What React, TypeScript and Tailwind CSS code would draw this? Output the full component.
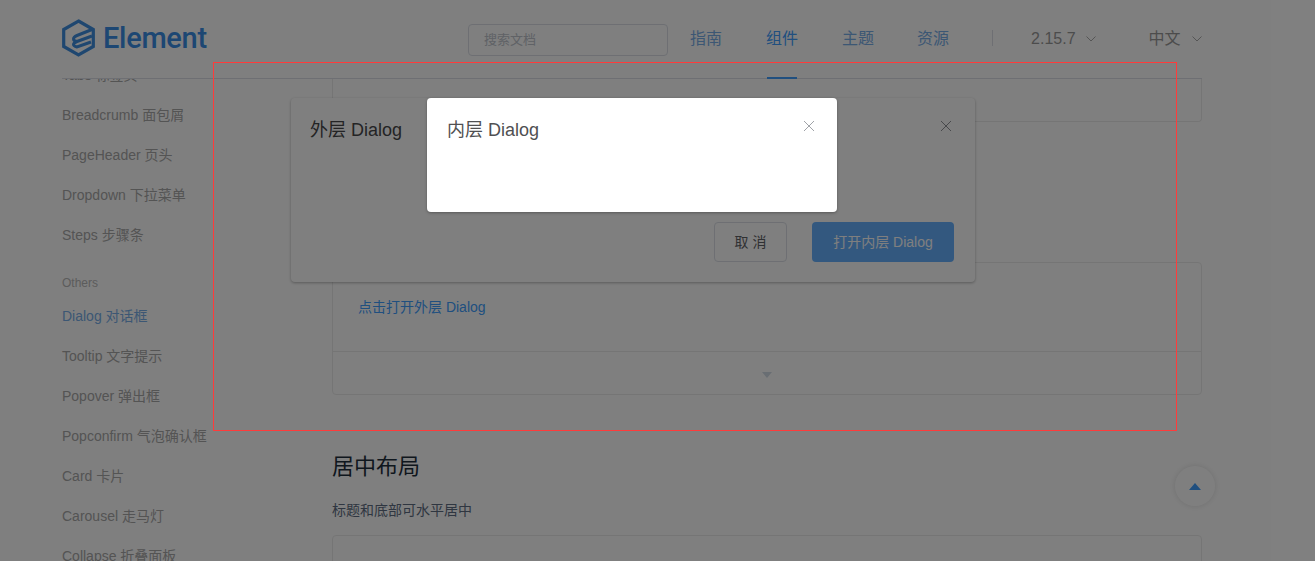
import React from "react";

const font = "font-['Liberation_Sans','Noto_Sans_CJK_SC',sans-serif]";

function Logo() {
  return (
    <div className="flex w-[406px] shrink-0 items-center">
      <svg width="33" height="38" viewBox="0 0 33 38" fill="none" className="shrink-0">
        <path d="M16.5 2 L31.3 10.5 V27.5 L16.5 36 L1.7 27.5 V10.5 Z" stroke="#3f8fe0" strokeWidth="3.2" />
        <path d="M30 10.5 L15 16.5 Q11.5 18 11.5 20 T15 22.5 L30 17 M30 17 L15 22.5 Q11.5 24 11.5 25.5 T15 28 L29 23" stroke="#3f8fe0" strokeWidth="3" fill="none" />
      </svg>
      <span className="ml-[8px] whitespace-nowrap font-['Roboto',sans-serif] text-[29px] leading-none font-medium tracking-[-0.3px] text-[#3a8ee6]">Element</span>
    </div>
  );
}

function Chevron() {
  return (
    <svg width="10" height="6" viewBox="0 0 10 6" fill="none" className="shrink-0">
      <path d="M0.5 0.5 L5 5 L9.5 0.5" stroke="#aaa" strokeWidth="1" />
    </svg>
  );
}

function X({ color }: { color: string }) {
  return (
    <svg width="12" height="12" viewBox="0 0 12 12" fill="none">
      <path d="M1 1 L11 11 M11 1 L1 11" stroke={color} strokeWidth="1" />
    </svg>
  );
}

const items = ["Breadcrumb 面包屑", "PageHeader 页头", "Dropdown 下拉菜单", "Steps 步骤条"];
const others = ["Tooltip 文字提示", "Popover 弹出框", "Popconfirm 气泡确认框", "Card 卡片", "Carousel 走马灯", "Collapse 折叠面板"];

export default function App() {
  return (
    <div className={`relative h-[561px] w-[1315px] overflow-hidden bg-white ${font}`}>
      {/* page */}
      <header className="ml-[62px] flex h-[79px] w-[1140px] items-center border-b border-[#dcdfe6] pb-[2px] whitespace-nowrap">
        <Logo />
        <div className="mt-[4px] flex h-[32px] w-[200px] shrink-0 items-center rounded border border-[#dcdfe6] pl-[15px] text-[13px] text-[#c0c4cc]">搜索文档</div>
        <nav className="ml-[22px] mt-[2px] flex shrink-0 items-center text-[16px] text-[#78aee8]">
          <span>指南</span>
          <span className="ml-[44px] text-[#409eff]">组件</span>
          <span className="ml-[44px]">主题</span>
          <span className="ml-[43px]">资源</span>
        </nav>
        <div className="ml-[43px] h-[16px] w-px shrink-0 bg-[#dcdfe6]" />
        <div className="ml-[38px] mt-[2px] flex shrink-0 items-center text-[16px] text-[#999]">2.15.7<span className="ml-[10px]"><Chevron /></span></div>
        <div className="ml-[53px] mt-[2px] flex shrink-0 items-center text-[16px] text-[#999]">中文<span className="ml-[11px]"><Chevron /></span></div>
      </header>
      <div className="ml-[62px] flex w-[1140px]">
        <aside className="w-[270px] shrink-0 whitespace-nowrap text-[14px] text-[#a8a8a8]">
          <div className="h-[16px] overflow-hidden">
            <div className="-mt-[24px] flex h-[40px] items-center">Tabs 标签页</div>
          </div>
          {items.map((t) => (
            <div key={t} className="flex h-[40px] items-center">{t}</div>
          ))}
          <div className="mt-[20px] h-[17px] text-[12px] leading-[17px] text-[#b8b8b8]">Others</div>
          <div className="mt-[4px] flex h-[40px] items-center text-[#78aee8]">Dialog 对话框</div>
          {others.map((t) => (
            <div key={t} className="flex h-[40px] items-center">{t}</div>
          ))}
        </aside>
        <main className="w-[870px] shrink-0">
          <div className="h-[43px] rounded-b border-x border-b border-[#ebebeb]" />
          <div className="mt-[140px] h-[133px] rounded border border-[#ebebeb]">
            <div className="flex h-[88px] items-start pl-[25px] pt-[34px] text-[14px] leading-[20px] text-[#409eff]">点击打开外层 Dialog</div>
            <div className="flex h-[43px] items-center justify-center border-t border-[#ebebeb] pt-[3px]">
              <div className="h-0 w-0 border-x-[5px] border-t-[6px] border-x-transparent border-t-[#d3dce6]" />
            </div>
          </div>
          <h3 className="mt-[54px] text-[22px] leading-[36px] text-[#1f2f3d]">居中布局</h3>
          <p className="mt-[14px] text-[14px] leading-[22px] text-[#5e6d82]">标题和底部可水平居中</p>
          <div className="mt-[14px] h-[100px] rounded border border-[#ebebeb]" />
        </main>
      </div>

      {/* active nav underline */}
      <div className="absolute left-[767px] top-[77px] h-[2px] w-[30px] bg-[#409eff]" />

      {/* back to top */}
      <div className="absolute left-[1175px] top-[466px] flex h-[40px] w-[40px] items-center justify-center rounded-full bg-white shadow-[0_0_6px_rgba(0,0,0,0.12)]">
        <div className="h-0 w-0 border-x-[6px] border-b-[7px] border-x-transparent border-b-[#409eff]" />
      </div>

      {/* outer dialog */}
      <div className="absolute left-[291px] top-[98px] flex h-[184px] w-[684px] flex-col rounded-sm bg-white shadow-[0_1px_3px_rgba(0,0,0,0.3)]">
        <div className="flex items-start justify-between pl-[19px] pr-[23px] pt-[20px]">
          <span className="text-[18px] leading-[24px] text-[#48484a]">外层 Dialog</span>
          <span className="mt-[2px]"><X color="#909399" /></span>
        </div>
        <div className="mt-auto flex justify-end pb-[20px] pr-[21px]">
          <div className="flex h-[40px] w-[73px] items-center justify-center rounded border border-[#dcdfe6] text-[14px] text-[#606266]">取 消</div>
          <div className="ml-[25px] flex h-[40px] w-[142px] items-center justify-center rounded bg-[#66b1ff] text-[14px] text-white">打开内层 Dialog</div>
        </div>
      </div>

      {/* overlay */}
      <div className="absolute inset-0 bg-black/50" />

      {/* inner dialog */}
      <div className="absolute left-[427px] top-[98px] h-[114px] w-[410px] rounded-sm bg-white shadow-[0_1px_3px_rgba(0,0,0,0.3)]">
        <div className="flex items-start justify-between pl-[20px] pr-[22px] pt-[20px]">
          <span className="text-[18px] leading-[24px] text-[#505052]">内层 Dialog</span>
          <span className="mt-[2px]"><X color="#a0a3a8" /></span>
        </div>
      </div>

      {/* red marker */}
      <div className="pointer-events-none absolute left-[213px] top-[62px] h-[369px] w-[964px] border border-[#ff3b3b]" />
    </div>
  );
}
